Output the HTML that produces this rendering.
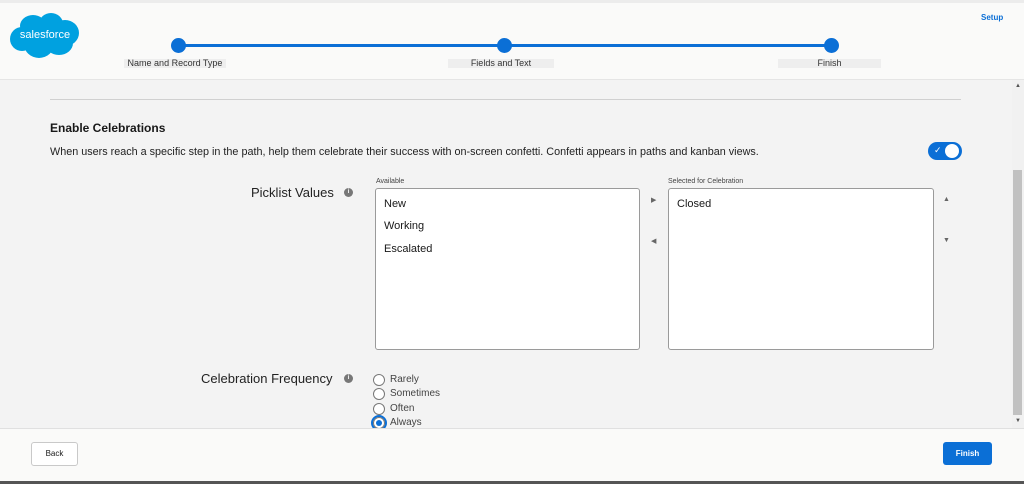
<!DOCTYPE html>
<html><head><meta charset="utf-8"><style>
*{box-sizing:border-box;margin:0;padding:0}
body{width:1024px;height:484px;overflow:hidden;background:#f3f3f3;font-family:"Liberation Sans",Arial,sans-serif;position:relative;color:#181818}
.abs{position:absolute}
.hdr{left:0;top:0;width:1024px;height:80px;background:#fafaf9;border-top:3px solid #ececec;border-bottom:1px solid #e5e5e5}
.dot{width:15px;height:15px;border-radius:50%;background:#0b6fd6}
.lbl{font-size:9px;color:#333;background:#eeeeee;height:9px;line-height:9px;text-align:center}
.box{background:#fff;border:1px solid #9a9a9a;border-radius:3px}
.it{font-size:11px;color:#181818}
.tri{font-size:7px;color:#666}
.radio{width:12px;height:12px;border:1px solid #777;border-radius:50%;background:#fff}
.rl{font-size:10px;color:#444}
.info{width:9px;height:9px;border-radius:50%;background:#777;color:#fff;font-size:6px;text-align:center;line-height:9px;font-weight:bold}
</style></head><body>
<div class="abs hdr"></div>
<svg class="abs" style="left:9px;top:11px" width="72" height="50" viewBox="0 0 72 50">
<g fill="#00a1e0"><ellipse cx="24" cy="15" rx="13" ry="11"/><ellipse cx="42" cy="13" rx="12" ry="11"/><ellipse cx="56" cy="22" rx="14" ry="13"/><ellipse cx="13" cy="28" rx="12" ry="12"/><ellipse cx="30" cy="33" rx="15" ry="14"/><ellipse cx="50" cy="32" rx="14" ry="12"/><rect x="12" y="18" width="50" height="18"/></g>
<text x="36" y="27" fill="#fff" font-size="11" text-anchor="middle" font-family="Liberation Sans,sans-serif">salesforce</text></svg>
<div class="abs" style="left:178px;top:44px;width:654px;height:3px;background:#0b6fd6"></div>
<div class="abs dot" style="left:171px;top:38px"></div>
<div class="abs dot" style="left:497px;top:38px"></div>
<div class="abs dot" style="left:824px;top:38px"></div>
<div class="abs lbl" style="left:124px;top:59px;width:102px">Name and Record Type</div>
<div class="abs lbl" style="left:448px;top:59px;width:106px">Fields and Text</div>
<div class="abs lbl" style="left:778px;top:59px;width:103px">Finish</div>
<div class="abs" style="left:981px;top:13px;font-size:8px;color:#0b6fd6;font-weight:bold">Setup</div>

<div class="abs" style="left:50px;top:99px;width:911px;height:1px;background:#d0d0d0"></div>
<div class="abs" style="left:50px;top:121px;font-size:12px;font-weight:bold">Enable Celebrations</div>
<div class="abs" style="left:50px;top:146px;font-size:10.8px;color:#222">When users reach a specific step in the path, help them celebrate their success with on-screen confetti. Confetti appears in paths and kanban views.</div>
<div class="abs" style="left:928px;top:142px;width:34px;height:18px;border-radius:9px;background:#0b6fd6"></div>
<div class="abs" style="left:945px;top:144px;width:14px;height:14px;border-radius:50%;background:#fff"></div>
<div class="abs" style="left:934px;top:145px;font-size:9px;color:#fff">✓</div>

<div class="abs" style="left:251px;top:185px;font-size:13px;color:#222">Picklist Values</div>
<div class="abs info" style="left:344px;top:188px">i</div>
<div class="abs" style="left:376px;top:178px;font-size:7px;color:#444">Available</div>
<div class="abs" style="left:668px;top:178px;font-size:7px;color:#444">Selected for Celebration</div>
<div class="abs box" style="left:375px;top:188px;width:265px;height:162px"></div>
<div class="abs box" style="left:668px;top:188px;width:266px;height:162px"></div>
<div class="abs it" style="left:384px;top:198px">New</div>
<div class="abs it" style="left:384px;top:220px">Working</div>
<div class="abs it" style="left:384px;top:243px">Escalated</div>
<div class="abs it" style="left:677px;top:198px">Closed</div>
<div class="abs tri" style="left:651px;top:196px">▶</div>
<div class="abs tri" style="left:651px;top:237px">◀</div>
<div class="abs tri" style="left:943px;top:196px">▲</div>
<div class="abs tri" style="left:943px;top:237px">▼</div>

<div class="abs" style="left:201px;top:371px;font-size:13px;color:#222">Celebration Frequency</div>
<div class="abs info" style="left:344px;top:374px">i</div>
<div class="abs radio" style="left:373px;top:374px"></div><div class="abs rl" style="left:390px;top:374px">Rarely</div>
<div class="abs radio" style="left:373px;top:388px"></div><div class="abs rl" style="left:390px;top:388px">Sometimes</div>
<div class="abs radio" style="left:373px;top:403px"></div><div class="abs rl" style="left:390px;top:403px">Often</div>
<div class="abs" style="left:371px;top:415px;width:16px;height:16px;border:2px solid #0b6fd6;border-radius:50%"></div>
<div class="abs radio" style="left:373px;top:417px"></div>
<div class="abs" style="left:376px;top:420px;width:6px;height:6px;border-radius:50%;background:#0b6fd6"></div>
<div class="abs rl" style="left:390px;top:417px">Always</div>

<div class="abs" style="left:1012px;top:80px;width:12px;height:348px;background:#f1f1f1"></div>
<div class="abs" style="left:1013px;top:170px;width:9px;height:245px;background:#c1c1c1"></div>
<div class="abs" style="left:1015px;top:83px;font-size:6px;color:#555">▲</div>
<div class="abs" style="left:1015px;top:418px;font-size:6px;color:#555">▼</div>

<div class="abs" style="left:0;top:428px;width:1024px;height:54px;background:#fafaf9;border-top:1px solid #e0e0e0"></div>
<div class="abs" style="left:31px;top:442px;width:47px;height:24px;background:#fff;border:1px solid #c9c9c9;border-radius:3px;font-size:8px;text-align:center;line-height:22px">Back</div>
<div class="abs" style="left:943px;top:442px;width:49px;height:23px;background:#0b6fd6;border-radius:3px;font-size:8px;color:#fff;font-weight:bold;text-align:center;line-height:23px">Finish</div>
<div class="abs" style="left:0;top:481px;width:1024px;height:3px;background:#555"></div>
</body></html>
